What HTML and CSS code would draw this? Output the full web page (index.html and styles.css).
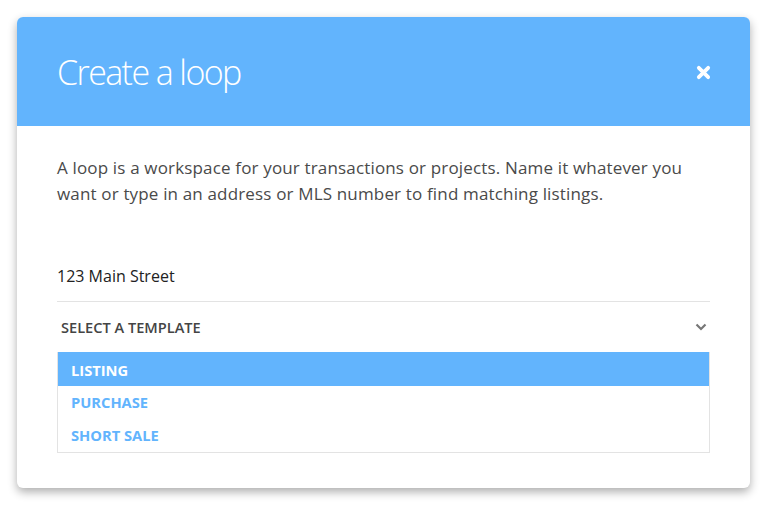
FILE: index.html
```html
<!DOCTYPE html>
<html lang="en">
<head>
    <meta charset="UTF-8">
    <meta name="viewport" content="width=device-width, initial-scale=1.0">
    <title>Create a loop</title>
    <link rel="stylesheet" href="styles.css">
</head>
<body>
    <div class="modal">
        <div class="modal-header">
            <h2>Create a loop</h2>
            <span class="close">
                <svg width="15" height="15" viewBox="0 0 16 16"><path d="M3 3 L13 13 M13 3 L3 13" stroke="#fff" stroke-width="4" stroke-linecap="round"/></svg>
            </span>
        </div>
        <div class="modal-body">
            <p class="intro">A loop is a workspace for your transactions or projects. Name it whatever you want or type in an address or MLS number to find matching listings.</p>

            <div class="name-field">123 Main Street</div>

            <div class="select">
                <span>SELECT A TEMPLATE</span>
                <svg width="12" height="8" viewBox="0 0 12 8"><path d="M1.5 1.5 L6 6 L10.5 1.5" fill="none" stroke="#777" stroke-width="2.2"/></svg>
            </div>

            <ul class="options">
                <li class="active">LISTING</li>
                <li>PURCHASE</li>
                <li>SHORT SALE</li>
            </ul>
        </div>
    </div>
</body>
</html>
```

FILE: styles.css
```css
html, body {
    height: 100%;
}
body {
    font-family: "Open Sans", Arial, sans-serif;
    margin: 0;
    padding-top: 17px;
    box-sizing: border-box;
    background: #fff;
}
.modal {
    width: 733px;
    margin-left: 17px;
    border-radius: 6px;
    background: #fff;
    box-shadow: 0 4px 10px rgba(0, 0, 0, 0.32);
    overflow: hidden;
}
.modal-header {
    height: 109px;
    background: #62b4fd;
    display: flex;
    align-items: center;
    justify-content: space-between;
    padding: 0 40px;
}
.modal-header h2 {
    margin: 0;
    color: #fff;
    font-weight: 300;
    font-size: 34px;
    letter-spacing: -1.6px;
}
.close {
    display: flex;
    margin-right: -1px;
    margin-top: 2px;
}
.modal-body {
    padding: 29px 40px 35px;
}
.intro {
    margin: 0;
    padding-right: 20px;
    font-size: 17px;
    line-height: 26px;
    letter-spacing: 0.16px;
    color: #4a4a4a;
}
.name-field {
    margin-top: 58px;
    font-size: 16px;
    color: #222;
    padding-bottom: 14px;
    border-bottom: 1px solid #e3e3e3;
}
.select {
    display: flex;
    align-items: center;
    justify-content: space-between;
    height: 50px;
    padding: 0 3px 0 4px;
    font-size: 14.6px;
    font-weight: 600;
    color: #444;
}
.options {
    list-style: none;
    margin: 0;
    padding: 0;
    border: 1px solid #e3e3e3;
    border-top: none;
}
.options li {
    height: 33px;
    line-height: 33px;
    padding-left: 13px;
    font-size: 14.7px;
    font-weight: 700;
    color: #62b4fd;
}
.options li.active {
    background: #62b4fd;
    color: #fff;
    height: 34px;
    line-height: 36px;
}
```
